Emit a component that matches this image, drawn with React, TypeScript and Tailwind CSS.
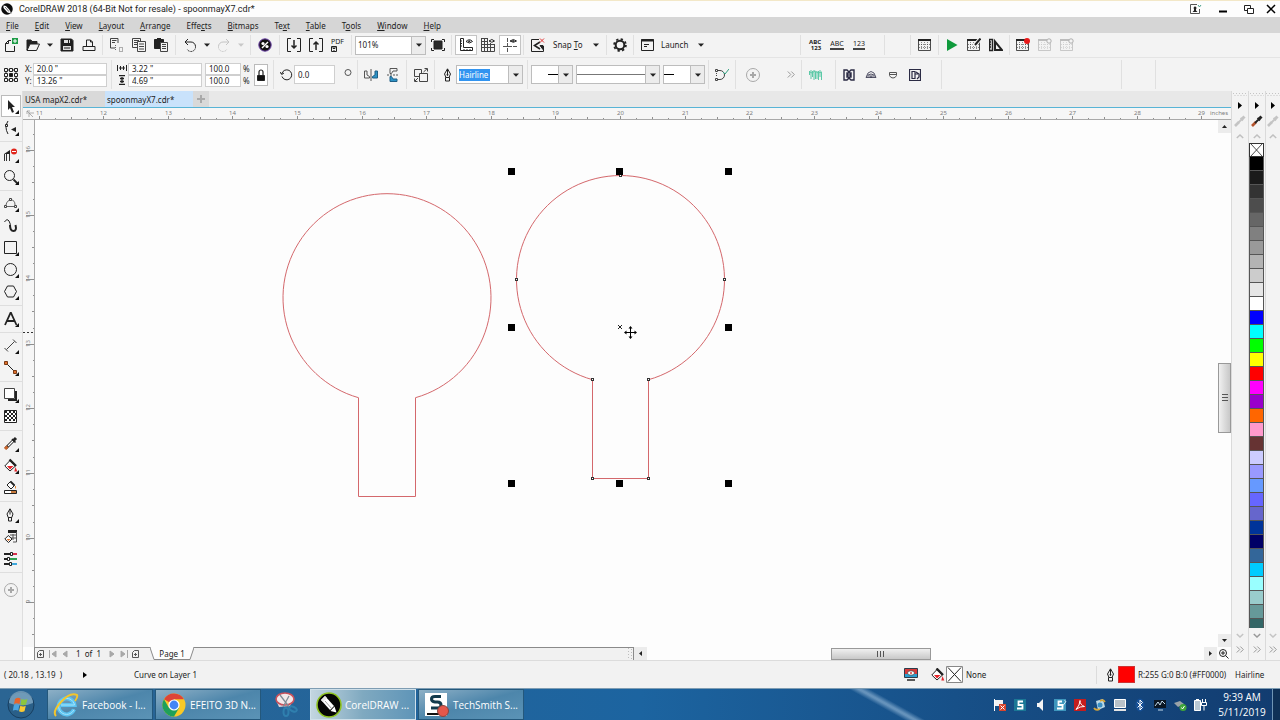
import type { ReactNode } from 'react'
import clsx from 'clsx'

type IconProps = { w?: number; h?: number; className?: string; children: ReactNode }

function Icon({ w = 14, h = 14, className, children }: IconProps) {
  return (
    <svg
      width={w}
      height={h}
      viewBox={`0 0 ${w} ${h}`}
      fill="none"
      stroke="currentColor"
      className={clsx('shrink-0', className)}
      aria-hidden="true"
    >
      {children}
    </svg>
  )
}

/* ---------- small shared pieces ---------- */

function Tool({ label, on, children }: { label: string; on?: boolean; children: ReactNode }) {
  return (
    <button
      aria-label={label}
      className={clsx(
        'flex h-[20px] w-[22px] shrink-0 items-center justify-center',
        on && 'border border-[#c4c4c4] bg-white',
      )}
    >
      {children}
    </button>
  )
}

function Down({ className }: { className?: string }) {
  return (
    <Icon w={6} h={4} className={className}>
      <path d="M0 .5h6L3 3.7z" fill="currentColor" stroke="none" />
    </Icon>
  )
}

function DropArrow({ label, off }: { label: string; off?: boolean }) {
  return (
    <button
      aria-label={label}
      className={clsx('flex h-[20px] w-3 shrink-0 items-center justify-center', off && 'text-[#c8c8c8]')}
    >
      <Down />
    </button>
  )
}

function Group({ className, children }: { className?: string; children?: ReactNode }) {
  return (
    <div className={clsx('flex shrink-0 items-center border-r border-[#e0e0e0]', className)}>{children}</div>
  )
}

function Field({ label, value, className }: { label: string; value: string; className?: string }) {
  return (
    <input
      aria-label={label}
      defaultValue={value}
      className={clsx('border border-[#cfcfcf] bg-white px-[3px] outline-none', className)}
    />
  )
}

function LineSelect({ label, className, children }: { label: string; className?: string; children: ReactNode }) {
  return (
    <div className={clsx('relative flex h-[19px] border border-[#bdbdbd] bg-white', className)}>
      <select aria-label={label} className="absolute inset-0 h-full w-full appearance-none text-transparent outline-none">
        <option>Default</option>
      </select>
      <span className="pointer-events-none relative flex flex-1 items-center">{children}</span>
      <span className="pointer-events-none relative flex w-[14px] items-center justify-center border-l border-[#bdbdbd] bg-[#ececec]">
        <Down />
      </span>
    </div>
  )
}

/* ---------- title and menu ---------- */

function CorelLogo({ size = 12 }: { size?: number }) {
  return (
    <svg width={size} height={size} viewBox="0 0 24 24" className="shrink-0" aria-hidden="true">
      <circle cx="12" cy="12" r="11.5" fill="#0b0b0b" />
      <path d="M5 5l5 1 8 9-5 4-8-9z" fill="#fff" />
      <path d="M13 19l5-4 2 6z" fill="#fff" />
      <path d="M8 8l7 8M18.5 19l1.5 2" stroke="#0b0b0b" strokeWidth="1.2" />
    </svg>
  )
}

function TitleBar() {
  return (
    <header className="flex h-[17px] shrink-0 items-center border-t border-[#f3e8c8] bg-[#fdfdfd] pl-[1px]">
      <CorelLogo />
      <h1 className="ml-[6px] flex-1 font-[Roboto,sans-serif] text-[9px]">
        CorelDRAW 2018 (64-Bit Not for resale) - spoonmayX7.cdr*
      </h1>
      <div className="flex items-center">
        <button aria-label="Account" className="flex w-[26px] justify-center">
          <Icon w={12} h={10}>
            <path d="M7 .5H.5v9h9V5" stroke="#555" />
            <path d="M5 2.500a1.500 1.500 0 0 1 1 2.600V6.500l1.500 1.500h-5L4 6.500V5A1.500 1.500 0 0 1 5 2.500z" fill="#222" stroke="none" />
            <path d="M8 1l1.500 2L11 1" stroke="#4aa08c" />
          </Icon>
        </button>
        <button aria-label="Minimize" className="flex w-[27px] justify-center pt-1">
          <Icon w={8} h={3}><path d="M0 1.500h8" stroke="#000" strokeWidth="2" /></Icon>
        </button>
        <button aria-label="Restore" className="flex w-[26px] justify-center">
          <Icon w={10} h={9}>
            <path d="M.5.5h6v5h-6z" />
            <path d="M3.500 3.500h6v5h-6z" fill="#fff" />
          </Icon>
        </button>
        <button aria-label="Close" className="flex w-[18px] justify-center">
          <Icon w={10} h={10}><path d="M1 1l8 8M9 1L1 9" stroke="#000" strokeWidth="1.500" /></Icon>
        </button>
      </div>
    </header>
  )
}

const menus = [
  ['', 'F', 'ile'],
  ['', 'E', 'dit'],
  ['', 'V', 'iew'],
  ['', 'L', 'ayout'],
  ['', 'A', 'rrange'],
  ['Effe', 'c', 'ts'],
  ['', 'B', 'itmaps'],
  ['Te', 'x', 't'],
  ['', 'T', 'able'],
  ['T', 'o', 'ols'],
  ['', 'W', 'indow'],
  ['', 'H', 'elp'],
]

function MenuBar() {
  return (
    <nav className="flex h-4 shrink-0 items-center gap-4 bg-[#d6d6d6] pt-[2px] pl-[6px]">
      {menus.map(([before, key, after]) => (
        <button key={before + key + after}>
          {before}
          <span className="underline">{key}</span>
          {after}
        </button>
      ))}
    </nav>
  )
}

/* ---------- standard toolbar ---------- */

function GridBase({ color = '#222' }: { color?: string }) {
  return (
    <>
      <path d="M0 2h13" stroke={color} strokeWidth="2" />
      <path d="M.5 3v9.500h12V3" stroke={color} opacity=".8" />
      <path d="M3.500 4v8M6.500 4v8M9.500 4v8M1 6.500h11M1 9.500h11" stroke={color} strokeDasharray="1 1" opacity=".5" />
    </>
  )
}

function StandardBar() {
  return (
    <div className="flex h-[25px] shrink-0 border-b border-[#e4e4e4] bg-[#f3f3f3] py-[2px]">
      <Group className="w-[103px]">
        <Tool label="New">
          <Icon>
            <path d="M7 2.500H4.500l-3 3v8h9V8M4.500 2.500v3h-3" />
            <path d="M8 0h6v6H8z" fill="#1f9c47" stroke="none" />
            <path d="M11 1v4M9 3h4" stroke="#fff" />
          </Icon>
        </Tool>
        <Tool label="Open">
          <Icon>
            <path d="M1 12V2h4l1 1.500h5V6H4z" fill="#222" />
            <path d="M1 12.500L4 6h9.500l-3 6.500z" fill="#f3f3f3" />
          </Icon>
        </Tool>
        <DropArrow label="Recent files" />
        <Tool label="Save">
          <Icon>
            <path d="M1 1h10.500L13 2.500V13H1z" fill="#1e1e1e" />
            <path d="M4 2h6v3H4zM3 8h8v4H3z" fill="#ddd" stroke="none" />
            <path d="M8.500 2v3M4 10h6" stroke="#1e1e1e" />
          </Icon>
        </Tool>
        <Tool label="Print">
          <Icon>
            <path d="M4.500 8V2h4l2 2v4M1 8.500h12v4H1zM8.500 2v2h2" />
          </Icon>
        </Tool>
      </Group>
      <Group className="w-[73px] justify-center">
        <Tool label="Cut">
          <Icon>
            <path d="M8 5V.5H.5V10H5M2 2.500h4.500M2 4.500h3" stroke="#444" />
            <path d="M5.500 7v5M9.500 9.500h3v4h-3z" stroke="#666" strokeDasharray="1 1" />
          </Icon>
        </Tool>
        <Tool label="Copy">
          <Icon>
            <path d="M5 9.500H.5v-9h8V3M2 2.500h5M2 4.500h3M2 6.500h3" stroke="#444" />
            <path d="M5.500 3.500h8v10h-8zM7 6h5M7 8.500h5M7 11h5" stroke="#444" />
          </Icon>
        </Tool>
        <Tool label="Paste">
          <Icon>
            <path d="M.5 1.500h9v9h-9z" fill="#222" />
            <path d="M3 1h4" stroke="#222" strokeWidth="2" />
            <path d="M6.500 4.500h7v9h-7z" fill="#f3f3f3" stroke="#444" />
            <path d="M8 6.500h4M8 8.500h4M8 10.500h4" stroke="#444" />
          </Icon>
        </Tool>
      </Group>
      <Group className="w-[75px] justify-center">
        <Tool label="Undo">
          <Icon>
            <path d="M5 1L2 4l3 3M2 4h6a4.500 4.500 0 0 1 4.500 4.500" />
            <path d="M12.500 8.500A4.500 4.500 0 0 1 4 11" strokeDasharray="2 1" />
          </Icon>
        </Tool>
        <DropArrow label="Undo history" />
        <Tool label="Redo">
          <Icon className="text-[#c4c4c4]">
            <path d="M9 1l3 3-3 3M12 4H6a4.500 4.500 0 0 0-4.500 4.500" />
            <path d="M1.500 8.500A4.500 4.500 0 0 0 10 11" strokeDasharray="2 1" />
          </Icon>
        </Tool>
        <DropArrow label="Redo history" off />
      </Group>
      <Group className="w-[29px] justify-center">
        <Tool label="Connect content">
          <Icon>
            <circle cx="7" cy="7" r="6.200" fill="#111" stroke="#6b3fa8" />
            <path d="M4 10L10 4" stroke="#fff" strokeWidth="1.400" />
            <circle cx="5" cy="5.500" r="1.600" fill="#fff" stroke="none" />
            <circle cx="9" cy="8.500" r="1.600" fill="#fff" stroke="none" />
          </Icon>
        </Tool>
      </Group>
      <Group className="w-[72px] justify-center">
        <Tool label="Import">
          <Icon>
            <path d="M4 .5H.5v13H4M10 .5h3.500v13H10" />
            <path d="M7 2v8M4.500 7.500L7 10l2.500-2.500" strokeWidth="1.500" />
          </Icon>
        </Tool>
        <Tool label="Export">
          <Icon>
            <path d="M4 .5H.5v13H4M10 .5h3.500v13H10" />
            <path d="M7 12V4M4.500 6.500L7 4l2.500 2.500" strokeWidth="1.500" />
          </Icon>
        </Tool>
        <Tool label="Publish to PDF">
          <span className="flex flex-col items-center">
            <span className="text-[7px] leading-[8px]">PDF</span>
            <Icon w={6} h={6} className="self-start"><path d="M.5.5h5v5h-5zM2 .5v2h2v-2M2.500 4.500h1" /></Icon>
          </span>
        </Tool>
      </Group>
      <Group className="w-[100px] pl-[3px]">
        <div className="mr-[1px] flex h-[19px] w-[71px] border border-[#bdbdbd] bg-white">
          <input aria-label="Zoom level" defaultValue="101%" className="w-0 flex-1 px-[2px] outline-none" />
          <button aria-label="Zoom levels" className="flex w-[14px] items-center justify-center border-l border-[#bdbdbd] bg-[#ececec]">
            <Down />
          </button>
        </div>
        <Tool label="Full-screen preview">
          <Icon>
            <path d="M3 3h8v8H3z" fill="#2b2b2b" />
            <path d="M.5 4V1.500H3M11 1.500h2.500V4M.5 10v2.500H3M11 12.500h2.500V10" />
          </Icon>
        </Tool>
      </Group>
      <Group className="w-[72px] justify-center">
        <Tool label="Show rulers" on>
          <Icon>
            <path d="M1.500.5h3v9h9v3h-12zM2 3h1M2 5.500h1M2 8h1M5 11v1M8 11v1M11 11v1" />
            <path d="M7 3.500q3.500-3.500 6.500 0-3 3-6.500 0z" />
            <circle cx="10.200" cy="3.300" r=".6" fill="#222" />
          </Icon>
        </Tool>
        <Tool label="Show grid">
          <Icon>
            <path
              d="M.5.500v13h13V6M3.500.500v13M6.500.500v13M9.500 5v8.500M0 3.500h7M0 6.500h14M0 9.500h14M0 .5h7"
              stroke="#444"
            />
            <path d="M8 3q3-3 5.500 0-2.500 2.500-5.500 0z" fill="#fff" />
          </Icon>
        </Tool>
        <Tool label="Show guidelines" on>
          <Icon>
            <path d="M4.500 0v14" stroke="#555" strokeDasharray="4 1" />
            <path d="M0 8.500h14" stroke="#555" strokeDasharray="4 1" />
            <path d="M7 3q3.500-3 6.500 0-3 2.600-6.500 0z" />
            <circle cx="10.200" cy="3" r=".6" fill="#222" />
          </Icon>
        </Tool>
      </Group>
      <Group className="w-[83px] pl-[3px]">
        <Tool label="Snap off">
          <Icon>
            <path d="M8 1.500H.5v12h12V8" />
            <path d="M9 4L3.500 7.500 9 11" strokeWidth="1.600" />
            <path d="M9 7.500h3v4z" fill="#222" />
            <path d="M9 .5l4 4M13 .5l-4 4" stroke="#e03535" />
          </Icon>
        </Tool>
        <button className="ml-1 flex flex-1 items-center justify-between pr-[7px]">
          <span>Snap <span className="underline">T</span>o</span>
          <Down />
        </button>
      </Group>
      <Group className="w-[27px] justify-center">
        <Tool label="Options">
          <Icon>
            <circle cx="7" cy="7" r="4.300" strokeWidth="2" />
            <circle cx="7" cy="7" r="5.900" strokeWidth="1.800" strokeDasharray="2.300 2.330" />
          </Icon>
        </Tool>
      </Group>
      <Group className="w-[167px] pl-[3px]">
        <Tool label="Application">
          <Icon>
            <path d="M.5 1.500h12v11H.5zM3 6.500h5M3 8.500h3" />
            <path d="M0 2.500h13" stroke="#222" strokeWidth="2" />
          </Icon>
        </Tool>
        <button className="ml-[2px] flex w-[43px] items-center justify-between">
          <span>Launch</span>
          <Down />
        </button>
      </Group>
      <Group className="w-[84px] pl-[3px]">
        <Tool label="Text properties">
          <span className="flex flex-col text-[6px] leading-[6px] font-bold"><span>ABC</span><span className="pl-[2px]">123</span></span>
        </Tool>
        <Tool label="Spell check"><span className="border-b-2 border-double border-[#444] text-[7px] leading-[8px]">ABC</span></Tool>
        <Tool label="Number check"><span className="border-b-2 border-double border-[#444] text-[7px] leading-[8px]">123</span></Tool>
      </Group>
      <Group className="w-[26px]" />
      <Group className="w-[28px] justify-center">
        <Tool label="Table"><Icon><GridBase /></Icon></Tool>
      </Group>
      <Group className="w-[71px] justify-center">
        <Tool label="Run script">
          <Icon w={12}><path d="M1 1l10.500 6L1 13z" fill="#0f9a3c" stroke="none" /></Icon>
        </Tool>
        <Tool label="Edit script">
          <Icon>
            <GridBase />
            <path d="M13 1L7 8" stroke="#f3f3f3" strokeWidth="4" />
            <path d="M13.500 .5L8 7" stroke="#222" strokeWidth="2" />
          </Icon>
        </Tool>
        <Tool label="Script editor">
          <Icon>
            <path d="M.5 1.500h3v11h-3zM0 4h2M0 6.500h2M0 9h2" strokeWidth="1.500" />
            <path d="M6 3.500v8.500h7z" strokeWidth="2" />
          </Icon>
        </Tool>
      </Group>
      <div className="flex flex-1 items-center pl-[2px]">
        <Tool label="Record script">
          <Icon><GridBase /><circle cx="11" cy="3" r="3" fill="#e81818" stroke="none" /></Icon>
        </Tool>
        <Tool label="Pause recording">
          <Icon><GridBase color="#bdbdbd" /><circle cx="11" cy="3" r="2.200" fill="#f3f3f3" stroke="#b0b0b0" /></Icon>
        </Tool>
        <Tool label="Stop recording">
          <Icon><GridBase color="#bdbdbd" /><circle cx="11" cy="3" r="2.200" fill="#f3f3f3" stroke="#b0b0b0" /></Icon>
        </Tool>
      </div>
    </div>
  )
}

/* ---------- property bar ---------- */

function PenNib() {
  return (
    <Icon w={9} h={14}>
      <path d="M4.500.8L7.500 6 6 9.500H3L1.500 6zM4.500 1v5.500M2.500 9.500h4v3.500h-4z" />
      <circle cx="4.500" cy="6.800" r=".6" fill="currentColor" />
    </Icon>
  )
}

function PropertyBar() {
  return (
    <div className="flex h-[33px] shrink-0 bg-[#f3f3f3] py-[2px]">
      <Group className="w-[112px] pl-1">
        <Icon className="mr-[7px]">
          <path d="M.5.500h3v3h-3zM5.500.500h3v3h-3zM10.500.500h3v3h-3zM.5 5.500h3v3h-3zM10.500 5.500h3v3h-3zM.5 10.500h3v3h-3zM5.500 10.500h3v3h-3zM10.500 10.500h3v3h-3z" />
          <path d="M4 2h1M9 2h1M4 12h1M9 12h1M2 4v1M2 9v1M12 4v1M12 9v1" />
          <path d="M5.500 5.500h3v3h-3z" fill="#111" />
        </Icon>
        <div className="flex flex-col">
          <label className="flex items-center">X:<Field label="X position" value={'20.0 "'} className="ml-[1px] h-3 w-[74px]" /></label>
          <label className="flex items-center">Y:<Field label="Y position" value={'13.26 "'} className="ml-[1px] h-3 w-[74px]" /></label>
        </div>
      </Group>
      <Group className="w-[162px] pl-1">
        <div className="mr-[1px] flex w-[11px] flex-col items-center gap-1">
          <Icon w={10} h={6}><path d="M.5 0v6M9.500 0v6M2 3h6M3.500 1v4M6.500 1v4" strokeWidth="1" /></Icon>
          <Icon w={6} h={10}><path d="M0 .5h6M0 9.500h6M3 2v6M1 3.500h4M1 6.500h4" strokeWidth="1.300" /></Icon>
        </div>
        <div className="flex flex-col">
          <Field label="Width" value={'3.22 "'} className="h-3 w-[74px]" />
          <Field label="Height" value={'4.69 "'} className="h-3 w-[74px]" />
        </div>
        <div className="ml-[3px] flex flex-col">
          <label className="flex items-center gap-[2px]"><Field label="Scale X" value="100.0" className="h-3 w-[36px]" />%</label>
          <label className="flex items-center gap-[2px]"><Field label="Scale Y" value="100.0" className="h-3 w-[36px]" />%</label>
        </div>
        <button aria-label="Lock ratio" className="ml-1 flex h-[22px] w-[14px] items-center justify-center border border-[#bbb] bg-white">
          <Icon w={8} h={12}>
            <path d="M2 6V3a2 2 0 0 1 4 0v3" strokeWidth="1.200" />
            <path d="M.5 6.500h7v5h-7z" fill="#111" />
          </Icon>
        </button>
      </Group>
      <Group className="w-[84px] pl-[6px]">
        <Icon w={13}>
          <path d="M2 8.500a5 5 0 1 0 1-5L1.500 6" />
          <path d="M0 4l1.700 2.500L4 5" />
        </Icon>
        <Field label="Rotation angle" value="0.0" className="ml-[1px] h-[19px] w-[41px]" />
        <Icon w={8} h={12} className="ml-[9px]"><circle cx="4" cy="3.500" r="3" stroke="#555" /></Icon>
      </Group>
      <Group className="w-[49px] justify-center">
        <Tool label="Mirror horizontally">
          <Icon>
            <path d="M.5 3v7h5V8.500L3 7V3z" stroke="#555" />
            <path d="M7 1v12" stroke="#555" />
            <path d="M13.500 3v7h-5V8.500L11 7V3z" fill="#2d93c6" stroke="#1f5f86" />
          </Icon>
        </Tool>
        <Tool label="Mirror vertically">
          <Icon>
            <path d="M11 .5H4v5h1.500L7 3h4z" stroke="#555" />
            <path d="M1 7h12" stroke="#555" strokeDasharray="2 1" />
            <path d="M11 13.500H4v-5h1.500L7 11h4z" fill="#2d93c6" stroke="#1f5f86" />
          </Icon>
        </Tool>
      </Group>
      <Group className="w-[28px] justify-center">
        <Tool label="Order">
          <Icon>
            <path d="M7.500 5V1.500H.5v7H5M5.500 5.500h8v8h-8z" stroke="#444" />
            <path d="M9.500 4L13 .8M10.500.5H13.500V3.500M.5 10.500v3h3M1 13l3-3" stroke="#444" />
          </Icon>
        </Tool>
      </Group>
      <Group className="w-[93px] pl-2">
        <PenNib />
        <div className="ml-[4px] flex h-[19px] w-[67px] border border-[#bdbdbd] bg-white">
          <div className="flex flex-1 items-center pl-[2px]">
            <input aria-label="Outline width" defaultValue="Hairline" className="h-[12px] w-[31px] bg-[#3294f0] text-white outline-none" />
          </div>
          <button aria-label="Outline widths" className="flex w-[14px] items-center justify-center border-l border-[#bdbdbd] bg-[#ececec]">
            <Down />
          </button>
        </div>
      </Group>
      <Group className="w-[181px] justify-center gap-[3px]">
        <LineSelect label="Start arrowhead" className="w-[42px]">
          <span className="ml-auto w-[10px] border-t border-black" />
        </LineSelect>
        <LineSelect label="Line style" className="w-[84px]">
          <span className="w-full border-t border-[#777]" />
        </LineSelect>
        <LineSelect label="End arrowhead" className="w-[42px]">
          <span className="w-[10px] border-t border-black" />
        </LineSelect>
      </Group>
      <Group className="w-[27px] justify-center">
        <Tool label="Close curve">
          <Icon>
            <path d="M3 2.500h2a4.500 4.500 0 0 1 0 9H3" stroke="#444" />
            <path d="M.5 1.500h2v2h-2zM.5 10.500h2v2h-2z" stroke="#444" />
            <path d="M1.500 5v4" strokeDasharray="1 1" stroke="#444" />
            <path d="M8 4l2 2 4-5" stroke="#2e9e7e" />
          </Icon>
        </Tool>
      </Group>
      <Group className="w-[66px] justify-between pr-[6px] pl-[10px] text-[#ababab]">
        <PlusCircle />
        <Chevrons />
      </Group>
      <Group className="w-[34px] justify-center pr-[6px]">
        <Icon w={14} h={12}>
          <path d="M.5 2v4M2 1v9M3.500 2v6M5 1v10M6.500 3v7M8 2v8M9.500 2v9M11 1v7M12.500 3v8" stroke="#5cc9a7" />
          <path d="M1 3l2 1 3-2 3 2 4-1" stroke="#5cc9a7" />
        </Icon>
      </Group>
      <Group className="w-[106px] pl-[2px] text-[#2b2b44]">
        <Tool label="Weld">
          <Icon w={12} h={12}><path d="M1 1h3l2 2 2-2h3v10H8L6 9l-2 2H1zM4 4h1v4H4zM7 4h1v4H7z" strokeWidth="1.400" /></Icon>
        </Tool>
        <Tool label="Trim">
          <Icon w={12} h={10}><path d="M1 7.500L3 3q3-3 6 0l2 4.500zM3 7V5q3-2 6 0v2M5 5v2h2V5" strokeWidth=".8" /></Icon>
        </Tool>
        <Tool label="Intersect">
          <Icon w={8} h={8}><path d="M.5 1.500h7v3Q6.500 7 4 7T.5 4.500zM1 3.500h6" stroke="#555" /></Icon>
        </Tool>
        <Tool label="Create boundary">
          <Icon w={12} h={12}><path d="M.5.5h11v11H.5zM3 2.500h3v7H3zM7 3l3 2v3l-2 2M6 5h3" strokeWidth="1.200" /></Icon>
        </Tool>
      </Group>
      <Group className="w-[180px]" />
      <Group className="w-[34px]" />
    </div>
  )
}

function PlusCircle() {
  return (
    <Icon w={14} h={14} className="text-[#a8a8a8]">
      <circle cx="7" cy="7" r="6.500" />
      <path d="M7 4v6M4 7h6" strokeWidth="2" />
    </Icon>
  )
}

function Chevrons() {
  return (
    <Icon w={8} h={7} className="text-[#999]"><path d="M.8.5l3 3-3 3M4.300.5l3 3-3 3" /></Icon>
  )
}

/* ---------- toolbox ---------- */

const toolbox: { label: string; flyout?: boolean; art: ReactNode }[][] = [
  [
    { label: 'Pick', flyout: true, art: <path d="M4 1l7 7H8l2 5-2 .8L6 9l-2 2z" fill="#222" stroke="none" /> },
    {
      label: 'Shape',
      flyout: true,
      art: (
        <>
          <path d="M4 0Q0 6 4 13" />
          <path d="M1.500 3.500h2v2h-2z" fill="#f3f3f3" />
          <path d="M7 8.500l5-2.500v5z" fill="#222" stroke="none" />
        </>
      ),
    },
  ],
  [
    {
      label: 'Crop',
      flyout: true,
      art: (
        <>
          <path d="M.5 13V6M2.500 13V6M5.500 13V3" stroke="#333" />
          <path d="M0 6l6-4v4z" fill="#222" stroke="none" />
          <circle cx="10" cy="3.500" r="3" fill="#e0251b" stroke="none" />
          <path d="M8 3.500h4" stroke="#fff" />
        </>
      ),
    },
    { label: 'Zoom', flyout: true, art: <><circle cx="5.500" cy="5.500" r="5" /><path d="M9.500 9.500l4 4" strokeWidth="1.800" /></> },
  ],
  [
    {
      label: 'Freehand',
      flyout: true,
      art: (
        <>
          <path d="M2 8q1-5 5-5t4 5M3 9.500h7" stroke="#666" />
          <path d="M.5 8.500h2v2h-2zM10.500 8.500h2v2h-2zM5.500 1.500h2v2h-2z" stroke="#444" fill="#f3f3f3" />
        </>
      ),
    },
    {
      label: 'Artistic media',
      art: (
        <>
          <path d="M.5 3Q3-1 5 2t1 6" />
          <path d="M6 6q0 6 3.500 6t2-6" strokeWidth="2" />
        </>
      ),
    },
    { label: 'Rectangle', flyout: true, art: <path d="M.5.500h12v12H.5z" /> },
    { label: 'Ellipse', flyout: true, art: <circle cx="6.500" cy="6.500" r="6" /> },
    { label: 'Polygon', flyout: true, art: <path d="M3.500 1h6L12.500 6.500 9.500 12h-6L.500 6.500z" /> },
  ],
  [{ label: 'Text', flyout: true, art: <path d="M1 13L6.500 1h.5l5.500 12M3 9h7.500" strokeWidth="1.800" /> }],
  [
    { label: 'Dimension', flyout: true, art: <path d="M2.500 10.500l8-8M.5 9l3.500 3.500M9 .5l3.500 3.500" stroke="#444" /> },
    {
      label: 'Connector',
      flyout: true,
      art: (
        <>
          <path d="M3 3l8 8" />
          <path d="M.5.500h3v3h-3zM9.500 9.500h3v3h-3z" fill="#e0702a" stroke="#7a3b17" />
        </>
      ),
    },
  ],
  [
    {
      label: 'Drop shadow',
      flyout: true,
      art: (
        <>
          <path d="M12 3v9H4" strokeWidth="2" />
          <path d="M.5.500h10v10h-10z" fill="#fff" stroke="#444" />
        </>
      ),
    },
    {
      label: 'Transparency',
      art: (
        <>
          <path d="M.5.500h12v12H.5z" fill="#fff" />
          <path d="M1 2h12M1 6h12M1 10h12" strokeWidth="2" strokeDasharray="2 2" />
          <path d="M3 4h10M3 8h10" strokeWidth="2" strokeDasharray="2 2" />
        </>
      ),
    },
  ],
  [
    {
      label: 'Color eyedropper',
      flyout: true,
      art: (
        <>
          <path d="M1.500 11.500l8-8" strokeWidth="3" />
          <path d="M4 9l5-5" stroke="#fff" strokeWidth="1.200" />
          <path d="M1 12l2.500-2.500" stroke="#c9652c" strokeWidth="3" />
          <path d="M8 2l3.500 3.500" strokeWidth="1.600" />
          <path d="M9.500 3.500L12 1" strokeWidth="3" />
        </>
      ),
    },
    { label: 'Interactive fill', flyout: true, art: <BucketArt /> },
    {
      label: 'Smart fill',
      art: (
        <>
          <path d="M3 4L6.500.5l4 4L7 8z" fill="#fff" />
          <path d="M6.500.5l4 4" strokeWidth="1.800" />
          <path d="M11.500 5v2.500" stroke="#e08a3a" />
          <path d="M.5 9.500h12v3H.5z" fill="#fff" />
          <path d="M7 10h5v2H7z" fill="#c87a3c" stroke="none" />
        </>
      ),
    },
  ],
  [
    {
      label: 'Outline pen',
      flyout: true,
      art: <path d="M6 .8L9 6 7.800 9.500H4.200L3 6zM6 1v5.500M4.500 9.500h3v3.500h-3z" />,
    },
    {
      label: 'Edit fill',
      art: (
        <>
          <path d="M4 1.500h9" strokeWidth="3" />
          <path d="M12.500 2v10H9M6 5h6M6 8h6M9 4v6" stroke="#555" />
          <path d="M.8 9L4.300 5.500 8 9l-3.500 3.500z" fill="#fff" />
          <path d="M2.500 9h4L4.500 11z" fill="#e0702a" stroke="none" />
        </>
      ),
    },
    {
      label: 'Color styles',
      art: (
        <>
          <path d="M0 2h7M0 7h3M0 12h5" strokeWidth="2" />
          <path d="M9 2h4" stroke="#d8304a" strokeWidth="2" />
          <path d="M6 7h7" stroke="#2fa050" strokeWidth="2" />
          <path d="M8 12h5" stroke="#3fa8dc" strokeWidth="2" />
          <path d="M6.500.5h2v3h-2zM3.500 5.500h2v3h-2zM5.500 10.500h2v3h-2z" fill="#fff" />
        </>
      ),
    },
  ],
]

function BucketArt() {
  return (
    <>
      <path d="M.8 7L6 1.500 11.500 7 6 12z" fill="#fff" />
      <path d="M5.500.5L12 7" strokeWidth="2.400" />
      <path d="M3 7h6.500L6 10.500z" fill="#e8242a" stroke="none" />
      <path d="M11.500 8l1.800 4.500h-3z" fill="#e8242a" stroke="none" />
    </>
  )
}

function Toolbox() {
  return (
    <aside className="flex w-[23px] shrink-0 flex-col border-r border-[#dedede] bg-[#f3f3f3] pt-1">
      {toolbox.map((group, i) => (
        <div key={i} className="mb-[2px] flex flex-col border-b border-[#dedede] pb-[2px]">
          {group.map((tool) => (
            <button
              key={tool.label}
              aria-label={tool.label}
              className={clsx(
                'ml-[1px] flex h-[22px] w-[20px] items-center justify-center',
                tool.label === 'Pick' && 'border border-[#bbb] bg-white',
              )}
            >
              <Icon w={16} h={16}>
                <g transform="translate(1 1)">{tool.art}</g>
                {tool.flyout && <path d="M16 12v4h-4z" fill="#111" stroke="none" />}
              </Icon>
            </button>
          ))}
        </div>
      ))}
      <button aria-label="Customize" className="flex h-[30px] w-[22px] items-center justify-center">
        <PlusCircle />
      </button>
    </aside>
  )
}

/* ---------- rulers, canvas ---------- */

const INCH = 64.6

function TopRuler() {
  const marks = Array.from({ length: 19 }, (_, i) => 11 + i)
  return (
    <div className="flex h-3 shrink-0 overflow-hidden border-b border-[#a9a9a9] bg-[#f6f6f6]">
      <svg className="h-[11px] w-full text-[6px]" stroke="#8f8f8f">
        <path d="M4 3l6 6M4 6V3h3M6 9V5h5" strokeWidth=".7" fill="none" />
        {marks.map((n) => {
          const x = Math.round(597 + (n - 20) * INCH) + 0.5
          return (
            <g key={n}>
              <path d={`M${x} 8v3`} />
              {n < 29 && <path d={`M${x + 16} 10v1M${x + 32} 9v2M${x + 48} 10v1`} />}
              <text x={x} y="7" textAnchor="middle" fill="#7d7d7d" stroke="none">{n}</text>
            </g>
          )
        })}
        <text x="1187" y="7" fill="#7d7d7d" stroke="none">inches</text>
      </svg>
    </div>
  )
}

function SideRuler() {
  const marks = [16, 15, 14, 13, 12, 11, 10, 9]
  return (
    <div className="w-3 shrink-0 border-r border-[#a9a9a9] bg-[#f6f6f6]">
      <svg className="h-full w-[11px] text-[6px]" stroke="#8f8f8f">
        {marks.map((n) => {
          const y = Math.round(30 + (16 - n) * INCH) + 0.5
          return (
            <g key={n}>
              <path d={`M3 ${y}h8M10 ${y - 16}h1M9 ${y + 32}h2M10 ${y + 16}h1`} />
              <text transform={`translate(7 ${y - 1}) rotate(-90)`} textAnchor="middle" fill="#7d7d7d" stroke="none">{n}</text>
            </g>
          )
        })}
        <path d="M0 212.500h11" stroke="#333" strokeDasharray="2 2" />
      </svg>
    </div>
  )
}

const handles = [
  [477, 51], [585, 51], [694, 51],
  [477, 207], [694, 207],
  [477, 363], [585, 363], [694, 363],
]

const nodes = [
  [481, 159], [689, 159], [585, 55], [557, 259], [613, 259], [557, 358], [613, 358],
]

function Drawing() {
  return (
    <svg className="absolute inset-0 h-full w-full" fill="none" aria-label="Curve on Layer 1">
      <g stroke="#d4686c">
        <path d="M323.500 277.700A104 104 0 1 1 380.500 277.700V376.500H323.500z" />
        <path d="M557.500 259.700A104 104 0 1 1 613.500 259.700V358.500H557.500z" />
      </g>
      {/* the stem opens straight into the bowl */}
      <path d="M324 277.700h56M558 259.700h55" stroke="#fdfdfd" />
      <g fill="#fff" stroke="#333">
        {nodes.map(([x, y]) => (
          <rect key={`${x}-${y}`} x={x - 0.5} y={y - 0.5} width="2" height="2" />
        ))}
      </g>
      <g fill="#000">
        {handles.map(([x, y]) => (
          <rect key={`${x}-${y}`} x={x - 4} y={y - 3} width="7" height="7" />
        ))}
      </g>
      <path d="M583 205l4 4M587 205l-4 4" stroke="#222" />
      <path d="M595.500 207.500v10M590.500 212.500h10" stroke="#000" />
      <path
        d="M595.500 206l2 2.500h-4zM595.500 219l2-2.500h-4zM589 212.500l2.500-2v4zM602 212.500l-2.500-2v4z"
        fill="#000"
      />
    </svg>
  )
}

function Nudge({ label, d }: { label: string; d: string }) {
  return (
    <button aria-label={label} className="flex h-[13px] w-[13px] shrink-0 items-center justify-center bg-[#ececec]">
      <Icon w={5} h={5}><path d={d} fill="#222" stroke="none" /></Icon>
    </button>
  )
}

function PageStep({ label, d }: { label: string; d: string }) {
  return (
    <button aria-label={label} className="flex w-3 justify-center text-[#a8a8a8]">
      <Icon w={8} h={8}><path d={d} fill="currentColor" /></Icon>
    </button>
  )
}

function AddPage({ label }: { label: string }) {
  return (
    <button aria-label={label} className="flex w-3 justify-center text-[#555]">
      <Icon w={8} h={8}><path d="M2.500.5h4v7h-6v-5zM2 4.500h3M3.500 3v3" /></Icon>
    </button>
  )
}

function PageBar() {
  return (
    <div className="flex h-[13px] shrink-0 bg-[#fdfdfd]">
      <div className="ml-[11px] flex w-[600px] items-center border-t border-r border-l border-[#8a8a8a] bg-[#f1f1f1]">
        <AddPage label="Add page before" />
        <PageStep label="First page" d="M.5 0v8M7 1v6L3 4z" />
        <PageStep label="Previous page" d="M6 1v6L2 4z" />
        <span className="px-[5px] whitespace-pre">1  of  1</span>
        <PageStep label="Next page" d="M2 1v6l4-3z" />
        <PageStep label="Last page" d="M1 1v6l4-3zM7.500 0v8" />
        <AddPage label="Add page after" />
        <button className="relative -mt-px ml-2 flex h-[13px] w-[44px] items-center justify-center">
          <svg className="absolute inset-0" width="44" height="13" fill="#fdfdfd" stroke="#8a8a8a" aria-hidden="true">
            <path d="M0 .5L4 12.500H40L44 .5" />
            <path d="M1 .5h42" stroke="#fdfdfd" />
          </svg>
          <span className="relative">Page 1</span>
        </button>
        <Icon w={6} h={12} className="ml-auto text-[#bdbdbd]">
          <path d="M1.500 0v12M4.500 1v12" strokeDasharray="1 2" />
        </Icon>
      </div>
      <div className="flex flex-1 items-center">
        <Nudge label="Scroll left" d="M4 0v5L1 2.500z" />
        <div className="flex-1">
          <div className="ml-[33%] flex h-3 w-[100px] items-center justify-center border border-[#999] bg-linear-to-b from-[#f0f0f0] to-[#c8c8c8]">
            <Icon w={8} h={6} className="text-[#555]"><path d="M.5 0v6M3.500 0v6M6.500 0v6" /></Icon>
          </div>
        </div>
        <Nudge label="Scroll right" d="M1 0v5l3-2.500z" />
        <button aria-label="Navigator" className="flex w-[14px] items-center justify-center">
          <Icon w={10} h={10}>
            <circle cx="4" cy="4" r="3.500" />
            <path d="M6.500 6.500l3 3M2 4h4M4 2v4" />
          </Icon>
        </button>
      </div>
    </div>
  )
}

function Workspace() {
  return (
    <main className="flex min-w-0 flex-1 flex-col">
      <div className="flex h-4 shrink-0 bg-[#e8e8e8]">
        <button className="w-[82px] bg-[#d9d9d9] pt-[2px] pl-[2px] text-left">USA mapX2.cdr*</button>
        <button className="w-[88px] bg-[#c9e2fb] pt-[2px] pl-[2px] text-left">spoonmayX7.cdr*</button>
        <button aria-label="New document" className="flex w-4 items-center justify-center bg-[#d9d9d9] text-[#aaa]">
          <Icon w={8} h={8}><path d="M4 0v8M0 4h8" strokeWidth="2" /></Icon>
        </button>
      </div>
      <div className="h-px shrink-0 bg-[#58b4d6]" />
      <TopRuler />
      <div className="flex min-h-0 flex-1">
        <SideRuler />
        <div className="relative flex-1 bg-[#fdfdfd]">
          <Drawing />
        </div>
        <div className="flex w-[13px] flex-col bg-[#fdfdfd]">
          <Nudge label="Scroll up" d="M0 4h5L2.500 1z" />
          <div className="flex flex-1 flex-col justify-center pt-[28px]">
            <div className="flex h-[70px] items-center justify-center border border-[#999] bg-linear-to-r from-[#f0f0f0] to-[#c8c8c8]">
              <Icon w={6} h={7} className="text-[#555]"><path d="M0 .5h6M0 3.500h6M0 6.500h6" /></Icon>
            </div>
          </div>
          <Nudge label="Scroll down" d="M0 1h5L2.500 4z" />
        </div>
      </div>
      <PageBar />
    </main>
  )
}

/* ---------- colour palettes ---------- */

const swatches = [
  '#000000', '#1a1a1a', '#333333', '#4d4d4d', '#666666', '#808080', '#999999', '#b3b3b3', '#cccccc',
  '#e6e6e6', '#ffffff', '#0000ff', '#00ffff', '#00ff00', '#ffff00', '#ff0000', '#ff00ff', '#9900cc',
  '#ff6600', '#ff99cc', '#663333', '#ccccff', '#9999ff', '#6699ff', '#6666ff', '#6666cc', '#003399',
  '#000066', '#336699', '#00ccff', '#99ffff', '#99cccc', '#669999', '#336666',
]

function Palette({ colors, className = 'w-[17px]' }: { colors?: string[]; className?: string }) {
  const tone = colors ? 'text-[#222]' : 'text-[#c4c4c4]'
  return (
    <div className={clsx('flex min-h-0 shrink-0 flex-col items-center border-l border-[#dadada] bg-[#f3f3f3] pt-[2px]', className)}>
      <Icon w={14} h={4} className="text-[#c4c4c4]">
        <path d="M0 .5h14" strokeDasharray="1 2" />
        <path d="M1.500 2.500h14" strokeDasharray="1 2" />
      </Icon>
      <button aria-label="Palette menu" className="flex h-4 items-center">
        <Icon w={4} h={7}><path d="M0 0v7l4-3.500z" fill="#000" stroke="none" /></Icon>
      </button>
      <button aria-label="Pick color" className={clsx('flex h-4 items-center', tone)}>
        <Icon w={12} h={12}>
          <path d="M1 11l4-4" stroke={colors ? '#b5532d' : 'currentColor'} strokeWidth="2.600" />
          <path d="M4 8l4-4M6.500 3l2.500 2.500" strokeWidth="1.800" />
          <path d="M8 4l2.500-2.500" strokeWidth="3" />
        </Icon>
      </button>
      <button aria-label="Scroll palette up" className="flex h-[14px] items-center text-[#c0c0c0]">
        <Icon w={8} h={5}><path d="M.8 4L4 1l3.200 3" strokeWidth="1.500" /></Icon>
      </button>
      <div className="min-h-0 w-[15px] flex-1 self-start overflow-hidden">
        {colors && (
          <>
            <button aria-label="No color" className="block h-[14px] w-full border border-[#333] bg-white">
              <Icon w={13} h={12}><path d="M1 0l11 12M12 0L1 12" strokeWidth=".8" /></Icon>
            </button>
            {colors.map((color) => (
              <button
                key={color}
                aria-label={color}
                className="block h-[14px] w-full border-x border-b border-[#555]"
                style={{ backgroundColor: color }}
              />
            ))}
          </>
        )}
      </div>
      <button aria-label="Scroll palette down" className={clsx('flex h-[14px] shrink-0 items-center', colors ? 'text-[#999]' : 'text-[#c4c4c4]')}>
        <Icon w={8} h={5}><path d="M.8 1L4 4l3.200-3" strokeWidth="1.500" /></Icon>
      </button>
      <button aria-label="Expand palette" className="flex h-[18px] shrink-0 items-start pt-1">
        <Chevrons />
      </button>
    </div>
  )
}

/* ---------- status bar ---------- */

function StatusBar() {
  return (
    <div className="flex h-[28px] shrink-0 items-center border-t border-[#dcdcdc] bg-[#f2f2f2] pl-1">
      <span className="w-[79px] whitespace-pre">( 20.18 , 13.19  )</span>
      <Icon w={4} h={6}><path d="M0 0v6l4-3z" fill="#000" stroke="none" /></Icon>
      <span className="ml-[47px] flex-1">Curve on Layer 1</span>
      <Icon w={14} h={13} className="mr-[13px]">
        <path d="M.5.500h13v9H.5z" fill="#2a9fd0" stroke="#2d3c4a" />
        <path d="M1 1h12v5H1z" fill="#d83a3a" stroke="none" />
        <ellipse cx="7" cy="5" rx="3.500" ry="2.200" fill="#fff" stroke="#333" strokeWidth=".7" />
        <circle cx="7" cy="5" r="1" fill="#d83a3a" stroke="none" />
        <path d="M3 12h8" stroke="#333" strokeWidth="1.600" />
      </Icon>
      <Icon><BucketArt /></Icon>
      <Icon w={17} h={17} className="ml-[1px] bg-white">
        <path d="M.5.5h16v16H.5z" stroke="#888" />
        <path d="M2 1.500l13 14M15 1.500l-13 14" />
      </Icon>
      <span className="ml-[3px] w-[131px] border-r border-[#dcdcdc] leading-[18px]">None</span>
      <span className="ml-[9px]"><PenNib /></span>
      <span className="ml-[3px] h-[17px] w-[17px] border border-[#c33] bg-[#ff0000]" />
      <span className="ml-[3px] w-[97px] whitespace-nowrap">R:255 G:0 B:0 (#FF0000)</span>
      <span className="w-[45px]">Hairline</span>
    </div>
  )
}

/* ---------- taskbar ---------- */

function IeLogo() {
  return (
    <svg width="26" height="26" viewBox="0 0 26 26" fill="none" aria-hidden="true">
      <path d="M21 17.500A8 8 0 1 1 21.500 13H8" stroke="#5cc4f2" strokeWidth="4" />
      <path d="M21 17.500A8 8 0 1 1 21.500 13H8" stroke="#a8e4fb" strokeWidth="1" />
      <path d="M3 24Q-1 20 8 10T24 3q1 2-2 6" stroke="#f3c52c" strokeWidth="2" />
    </svg>
  )
}

function ChromeLogo() {
  return (
    <svg width="24" height="24" viewBox="0 0 24 24" aria-hidden="true">
      <circle cx="12" cy="12" r="11.500" fill="#f9c925" />
      <path d="M12 12L2 6.200A11.500 11.500 0 0 1 22 6.300H12z" fill="#dd4437" />
      <path d="M12 12l5 2.900L12 23.500A11.500 11.500 0 0 1 2 6.200l5 8.700z" fill="#1ea05a" />
      <circle cx="12" cy="12" r="5.600" fill="#fff" />
      <circle cx="12" cy="12" r="4.400" fill="#4486f4" />
    </svg>
  )
}

function CorelTaskLogo() {
  return (
    <svg width="26" height="26" viewBox="0 0 26 26" aria-hidden="true">
      <circle cx="13" cy="13" r="12" fill="#050505" stroke="#8fc31f" strokeWidth="1.600" />
      <path d="M5 8l4-4 9 10-4 4z" fill="#fff" />
      <path d="M14.500 19l4-4.500 2 6z" fill="#fff" />
      <path d="M5 8l4-4 2 2-4 4z" fill="#e8e8e8" />
      <path d="M9 9l7 8" stroke="#888" strokeWidth=".8" />
    </svg>
  )
}

function SnagitLogo() {
  return (
    <svg width="26" height="26" viewBox="0 0 26 26" fill="none" aria-hidden="true">
      <path d="M1 1h22v23H1z" fill="#fff" />
      <path d="M17 4.500H11Q7.500 4.500 7.500 7t3.500 3h2.500q3.500 0 3.500 3t-3.500 3H7" stroke="#123a4c" strokeWidth="3" />
      <path d="M3 22h12" stroke="#111" strokeWidth="2" />
      <circle cx="19" cy="19" r="5.500" fill="#e4574b" stroke="#8a4540" />
    </svg>
  )
}

function SnipLogo() {
  return (
    <svg width="24" height="26" viewBox="0 0 24 26" fill="none" aria-hidden="true">
      <path d="M2 8l3 7 11-1 4-7z" fill="#dcd4da" />
      <ellipse cx="11" cy="7" rx="9" ry="6" fill="#f3e9ea" stroke="#c9525c" strokeWidth="1.600" />
      <path d="M6 3l10 13M15 4L9 15" stroke="#7f8c96" strokeWidth="1.300" />
      <ellipse cx="12" cy="20" rx="2.500" ry="4" stroke="#2f7fae" strokeWidth="2" />
      <ellipse cx="19" cy="17" rx="4" ry="2.200" stroke="#2f7fae" strokeWidth="2" transform="rotate(25 19 17)" />
    </svg>
  )
}

function StartOrb() {
  return (
    <svg width="28" height="28" viewBox="0 0 28 28" aria-hidden="true">
      <circle cx="14" cy="14" r="13" fill="#2a5f88" stroke="#183f60" />
      <path d="M2 12a12 12 0 0 1 24 0q-12 5-24 0z" fill="#8db3cd" opacity=".7" />
      <path d="M8 8q3-2 5.500-.5L12.500 13q-3-1.500-5.500 0z" fill="#e8642a" />
      <path d="M14.500 8q3 1.500 6 0L19 13.500q-3 1.500-5.500 0z" fill="#8cc63e" />
      <path d="M6.800 14.200q3-1.500 5.500 0l-1 5.500q-3-1.500-5.500 0z" fill="#4aa4e0" />
      <path d="M13.300 14.800q3 1.500 5.500 0l-1.300 5.500q-3 1.500-5.500 0z" fill="#fbc932" />
    </svg>
  )
}

const tasks = [
  { name: 'Facebook - I...', icon: <IeLogo /> },
  { name: 'EFEITO 3D N...', icon: <ChromeLogo /> },
  { name: 'CorelDRAW ...', icon: <CorelTaskLogo />, active: true },
  { name: 'TechSmith S...', icon: <SnagitLogo /> },
]

function Task({ name, icon, active }: { name: string; icon: ReactNode; active?: boolean }) {
  return (
    <button
      className={clsx(
        'flex h-[31px] w-[106px] items-center gap-[3px] border pl-[5px] whitespace-nowrap',
        active
          ? 'border-[#cfe0ea] bg-linear-to-r from-[#c3d6e0] via-[#7fa9c0] to-[#5f95b8]'
          : 'border-[#24587c] bg-linear-to-br from-[#8db0c6] via-[#4d86ab] to-[#5b93b6]',
      )}
    >
      <span className="flex w-[26px] justify-center">{icon}</span>
      {name}
    </button>
  )
}

const tray: { label: string; art: ReactNode }[] = [
  {
    label: 'Action Center',
    art: (
      <>
        <path d="M1.500 1v12" stroke="#fff" />
        <path d="M2 2h8v6H2z" fill="#f2f2f2" stroke="none" />
        <path d="M6 6h7v7H6z" fill="#d8452c" stroke="none" />
        <path d="M7.500 7.500l4 4M11.500 7.500l-4 4" stroke="#fff" />
      </>
    ),
  },
  {
    label: 'Snagit',
    art: (
      <>
        <path d="M1 1h12v12H1z" fill="#1b7896" stroke="none" />
        <path d="M10 3.500H5.500v3.500h4v3.500H4" stroke="#fff" strokeWidth="1.800" />
      </>
    ),
  },
  { label: 'Volume', art: <path d="M4 5h2l4-4v12L6 9H4z" fill="#f4f4f4" stroke="none" /> },
  {
    label: 'Snagit Editor',
    art: (
      <>
        <path d="M1 1h12v12H1z" fill="#3e96bd" stroke="none" />
        <path d="M11.500 2.500l1.500 1-3 4" stroke="#d6e9f3" />
        <path d="M9 3.500H5.500v3.500h4v3.500H4" stroke="#fff" strokeWidth="1.800" />
      </>
    ),
  },
  {
    label: 'Acrobat',
    art: (
      <>
        <path d="M1 1h12v12H1z" fill="#c51d1d" stroke="none" />
        <path d="M3 11.500Q7 7 7 2.500 7 7 11.500 8.500 7 8 3 11.500z" stroke="#fff" />
      </>
    ),
  },
  {
    label: 'Sync',
    art: (
      <>
        <path d="M3 3l7-2 2 8-7 3z" fill="#bcd8e6" stroke="none" />
        <path d="M1 10q2 3 6 1M12 4q-2-3-5-1" stroke="#d9a73a" strokeWidth="1.800" />
        <circle cx="7" cy="7" r="2.500" fill="#3b8fc4" stroke="none" />
      </>
    ),
  },
  {
    label: 'Display',
    art: (
      <>
        <path d="M1.500 1.500h11v8h-11z" fill="#b9c2c9" stroke="#fff" />
        <path d="M1 12h12" stroke="#e4e4e4" strokeWidth="2" />
      </>
    ),
  },
  {
    label: 'Bluetooth',
    art: (
      <>
        <ellipse cx="7" cy="7" rx="4.500" ry="6.500" fill="#164f94" stroke="none" />
        <path d="M4.500 4.500l5 5L7 12V2l2.500 2.500-5 5" stroke="#fff" />
      </>
    ),
  },
  {
    label: 'Network',
    art: (
      <>
        <path d="M1 2h12v8H1z" fill="#0c1724" stroke="none" />
        <path d="M2 8l3-4 2 3 2-4 3 3M5 12h5" stroke="#c5dcec" />
      </>
    ),
  },
  {
    label: 'Safely remove hardware',
    art: (
      <>
        <path d="M1 5l6-2 4 3-6 3z" fill="#9aa3a8" stroke="none" />
        <circle cx="10" cy="9.500" r="3.500" fill="#3fa53a" stroke="none" />
        <path d="M8.500 9.500l1 1.500 2-3" stroke="#fff" />
      </>
    ),
  },
  {
    label: 'Power',
    art: (
      <>
        <path d="M1.500 2.500h6v10h-6zM3 1.500h3" stroke="#fff" fill="#b8c8d4" />
        <path d="M9.500 1v3M12.500 1v3M8.500 4.500h5v3h-5zM11 7.500v5" stroke="#fff" />
      </>
    ),
  },
]

function Taskbar() {
  return (
    <footer className="flex h-8 shrink-0 items-center overflow-hidden border-t border-[#7f9db3] bg-linear-to-r from-[#2b6593] via-[#1c64a0] to-[#123c70] font-['Open_Sans',sans-serif] text-[10px] text-white">
      <button aria-label="Start" className="flex w-[47px] shrink-0 justify-start pl-[7px]"><StartOrb /></button>
      <div className="flex shrink-0 gap-[2px]">
        {tasks.slice(0, 2).map((t) => <Task key={t.name} {...t} />)}
        <button aria-label="Snipping Tool" className="flex w-[45px] items-center justify-center"><SnipLogo /></button>
        {tasks.slice(2).map((t) => <Task key={t.name} {...t} />)}
      </div>
      {/* light streak of the aero wallpaper */}
      <div className="h-full flex-1 bg-[linear-gradient(29deg,transparent_42%,#6592bb_49%,#6592bb_51%,transparent_58%)] bg-[length:76px_100%] bg-[position:100%_0] bg-no-repeat" />
      <div className="ml-[68px] flex shrink-0 items-center gap-[6px]">
        {tray.map((t) => (
          <button key={t.label} aria-label={t.label}><Icon>{t.art}</Icon></button>
        ))}
      </div>
      <time className="ml-[5px] flex w-[60px] shrink-0 flex-col text-center leading-[15px]">
        <span>9:39 AM</span>
        <span>5/11/2019</span>
      </time>
      <button aria-label="Show desktop" className="h-full w-2 shrink-0 border-l border-[#6f95b5] bg-[#0f3157]" />
    </footer>
  )
}

export default function App() {
  return (
    <div className="flex h-screen flex-col overflow-hidden bg-[#f3f3f3] font-['Noto_Sans',sans-serif] text-[8px] leading-3 text-[#222]">
      <TitleBar />
      <MenuBar />
      <StandardBar />
      <PropertyBar />
      <div className="flex min-h-0 flex-1">
        <Toolbox />
        <Workspace />
        <Palette />
        <Palette colors={swatches} />
        <Palette className="w-[15px]" />
      </div>
      <StatusBar />
      <Taskbar />
    </div>
  )
}
